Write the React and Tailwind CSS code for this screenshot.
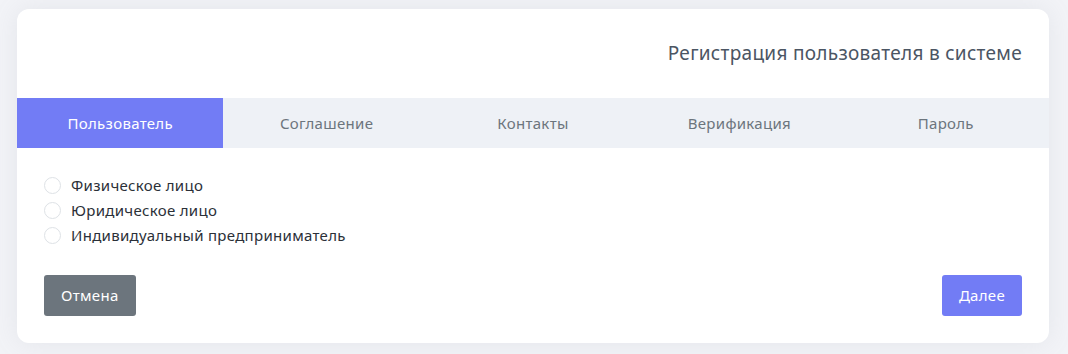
import { useState } from 'react';

const tabs = ['Пользователь', 'Соглашение', 'Контакты', 'Верификация', 'Пароль'];
const options = ['Физическое лицо', 'Юридическое лицо', 'Индивидуальный предприниматель'];

const App = () => {
  const [active] = useState(0);
  const [choice, setChoice] = useState(null);

  return (
    <div className="min-h-screen bg-[#f2f3f7] pl-[17px] pr-[19px] pt-[9px] pb-[11px]" style={{ fontFamily: '"Noto Sans", "Open Sans", sans-serif' }}>
      <div className="bg-white rounded-[12px] shadow-[0_0_24px_rgba(154,161,171,0.15)] overflow-hidden">
        <div className="h-[89px] flex items-center justify-end px-[27px]">
          <h1 className="text-[19px] text-[#4b5563] tracking-[0.3px]">Регистрация пользователя в системе</h1>
        </div>

        <div className="grid grid-cols-5 h-[50px] bg-[#eef1f6]">
          {tabs.map((tab, i) => (
            <div
              key={tab}
              className={
                i === active
                  ? 'flex items-center justify-center bg-[#727cf5] text-white text-[15px] tracking-[0.3px]'
                  : 'flex items-center justify-center text-[#6c757d] text-[15px] tracking-[0.3px]'
              }
            >
              {tab}
            </div>
          ))}
        </div>

        <div className="px-[27px] pt-[27px] pb-[27px]">
          <div className="flex flex-col gap-[4px]">
            {options.map((opt, i) => (
              <label key={opt} className="flex items-center gap-[10px] h-[21px] cursor-pointer">
                <span
                  className="w-[17px] h-[17px] rounded-full border border-[#dee2e6] bg-white flex items-center justify-center"
                  onClick={() => setChoice(i)}
                >
                  {choice === i && <span className="w-[7px] h-[7px] rounded-full bg-[#727cf5]" />}
                </span>
                <span className="text-[15px] text-[#2b3038] tracking-[0.3px]">{opt}</span>
              </label>
            ))}
          </div>

          <div className="flex justify-between mt-[29px]">
            <button className="h-[41px] px-[17px] rounded-[3px] bg-[#6c757d] text-white text-[15px] tracking-[0.3px]">Отмена</button>
            <button className="h-[41px] px-[17px] rounded-[3px] bg-[#727cf5] text-white text-[15px] tracking-[0.3px]">Далее</button>
          </div>
        </div>
      </div>
    </div>
  );
};

export default App;
